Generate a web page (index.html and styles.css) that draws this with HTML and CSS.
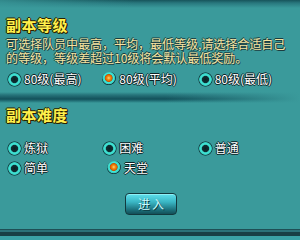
FILE: index.html
```html
<!DOCTYPE html>
<html>
<head>
<meta charset="utf-8">
<link rel="stylesheet" href="styles.css">
</head>
<body>
<div class="panel">
  <section class="sec sec-level">
    <h2 class="title">副本等级</h2>
    <div class="desc">
      <span class="line">可选择队员中最高，平均，最低等级,请选择合适自己</span>
      <span class="line">的等级，等级差超过10级将会默认最低奖励。</span>
    </div>
    <div class="row">
      <label class="opt"><span class="radio"></span><span class="lbl">80级(最高)</span></label>
      <label class="opt"><span class="radio on"></span><span class="lbl">80级(平均)</span></label>
      <label class="opt"><span class="radio"></span><span class="lbl">80级(最低)</span></label>
    </div>
  </section>
  <div class="sep"></div>
  <section class="sec sec-diff">
    <h2 class="title">副本难度</h2>
    <div class="row first">
      <label class="opt"><span class="radio"></span><span class="lbl">炼狱</span></label>
      <label class="opt"><span class="radio"></span><span class="lbl">困难</span></label>
      <label class="opt"><span class="radio"></span><span class="lbl">普通</span></label>
    </div>
    <div class="row">
      <label class="opt"><span class="radio"></span><span class="lbl">简单</span></label>
      <label class="opt"><span class="radio on"></span><span class="lbl">天堂</span></label>
    </div>
    <div class="btn-wrap"><button class="btn">进入</button></div>
  </section>
  <div class="footer"></div>
</div>
</body>
</html>
```
FILE: styles.css
```css
html, body {
  margin: 0;
  padding: 0;
  background: #3a9a9b;
}
.panel {
  width: 300px;
  height: 240px;
  overflow: hidden;
  background: #3a9a9b;
  font-family: "Noto Sans CJK SC", "DejaVu Sans", sans-serif;
  font-size: 12px;
}
.sec-level {
  height: 92px;
  box-sizing: border-box;
  padding: 16px 6px 0;
  background: linear-gradient(to right, rgba(58,154,155,0.75) 0%, rgba(58,154,155,0) 45%),
              linear-gradient(to bottom, #17545b 0px, #28777d 3px, #3a9a9b 8px);
}
.title {
  margin: 0;
  font-size: 15px;
  line-height: 18px;
  font-weight: bold;
  color: #fff04c;
  text-shadow: 1px 0 0 #2a2000, -1px 0 0 #2a2000, 0 1px 0 #2a2000, 0 -1px 0 #2a2000, 1px 1px 0 #2a2000;
  letter-spacing: 0.5px;
}
.desc {
  margin-top: 3px;
  color: #f6e4a0;
  white-space: nowrap;
  text-shadow: 1px 1px 0 #1d3d40, -1px 0 0 #1d3d40, 0 -1px 0 #1d3d40;
}
.line {
  display: block;
  height: 14px;
  line-height: 14px;
}
.row {
  display: flex;
  margin-top: 7px;
  padding-left: 2px;
  height: 14px;
}
.sec-diff .row {
  height: 20px;
  margin-top: 0;
}
.sec-diff .row.first {
  margin-top: 14px;
}
.opt {
  width: 100px;
  display: flex;
  align-items: center;
  gap: 3px;
}
.radio {
  width: 15px;
  height: 15px;
  border-radius: 50%;
  flex: none;
  margin-left: -1px;
  margin-right: -1px;
  background: radial-gradient(circle at 50% 50%, #0a2124 0, #0f2f33 3.3px, #2fb6ad 3.8px, #45ecdc 4.6px, #32c6ba 6px, #123e42 6.6px, rgba(18,62,66,0.5) 7.2px, rgba(18,62,66,0) 7.5px);
}
.radio.on {
  background: radial-gradient(circle at 45% 40%, #ffd27a 0, #f28a10 1.8px, #cf5500 3.6px, #2fb6ad 4px, #45ecdc 4.6px, #32c6ba 6px, #123e42 6.6px, rgba(18,62,66,0.5) 7.2px, rgba(18,62,66,0) 7.5px);
}
.lbl {
  color: #ffffff;
  line-height: 14px;
  white-space: nowrap;
  text-shadow: 1px 0 0 #0d2224, -1px 0 0 #0d2224, 0 1px 0 #0d2224, 0 -1px 0 #0d2224;
}
.sep {
  height: 11px;
  background: linear-gradient(to right, rgba(58,154,155,0) 0%, rgba(58,154,155,0) 55%, #3a9a9b 100%),
              linear-gradient(to bottom, #3a9a9b 0px, #26737a 3px, #13505a 7px, #24737a 9px, #3a9a9b 11px);
}
.sec-diff {
  padding: 3px 6px 0;
}
.btn-wrap {
  display: flex;
  justify-content: center;
  margin-top: 15px;
}
.btn {
  width: 52px;
  height: 22px;
  padding: 0;
  margin-left: 2px;
  border: 1px solid #12393e;
  border-radius: 4px;
  background: linear-gradient(to bottom, #5ee0ec 0%, #3ab6c4 40%, #1b6f7a 80%, #134f58 100%);
  box-shadow: inset 0 1px 0 #8ef0f5;
  color: #c8fbff;
  font-family: "Noto Sans CJK SC", sans-serif;
  font-size: 12px;
  line-height: 20px;
  letter-spacing: 2px;
  text-indent: 2px;
  text-shadow: 1px 1px 0 #0d3a40;
}
.footer {
  margin-top: 14px;
  height: 11px;
  background: linear-gradient(to bottom, #1f4f55 0, #1f4f55 1px, #2b7178 1px, #2b7178 3px, #183f45 3px, #183f45 7px, #3aa1a5 7px, #3aa1a5 11px);
}
```
